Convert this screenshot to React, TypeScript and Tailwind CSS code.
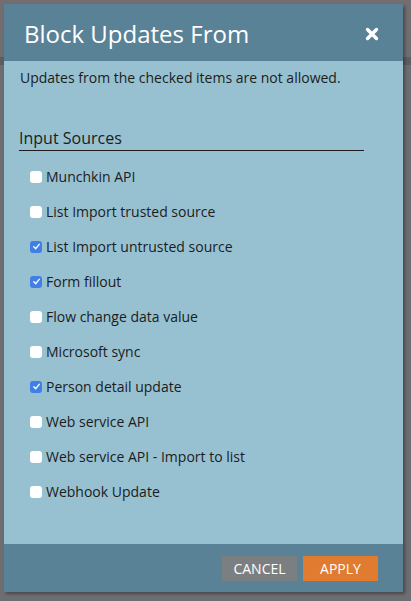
import React, { useState } from 'react';

const sources = [
  { label: 'Munchkin API', checked: false },
  { label: 'List Import trusted source', checked: false },
  { label: 'List Import untrusted source', checked: true },
  { label: 'Form fillout', checked: true },
  { label: 'Flow change data value', checked: false },
  { label: 'Microsoft sync', checked: false },
  { label: 'Person detail update', checked: true },
  { label: 'Web service API', checked: false },
  { label: 'Web service API - Import to list', checked: false },
  { label: 'Webhook Update', checked: false },
];

const Box: React.FC<{ checked: boolean }> = ({ checked }) =>
  checked ? (
    <span className="flex h-[12px] w-[12px] items-center justify-center rounded-[3px] bg-[#3f7fe6]">
      <svg width="9" height="9" viewBox="0 0 10 10">
        <path d="M2 5.3 L4.2 7.4 L8 2.6" fill="none" stroke="white" strokeWidth="1.6" strokeLinecap="round" strokeLinejoin="round" />
      </svg>
    </span>
  ) : (
    <span className="h-[12px] w-[12px] rounded-[3px] bg-white" />
  );

export default function App() {
  const [items, setItems] = useState(sources);

  const toggle = (i: number) =>
    setItems(items.map((it, j) => (j === i ? { ...it, checked: !it.checked } : it)));

  return (
    <div
      className="h-[601px] w-[411px] bg-[linear-gradient(to_bottom,#756d70_0px,#6e6e72_57px,#5e5e62_57px,#5e5e62_65px,#6e6e72_65px)] p-[4px]"
      style={{ fontFamily: '"Open Sans", "Noto Sans", sans-serif' }}
    >
      <div className="flex h-[588px] w-[399px] flex-col bg-[#97c1d1] shadow-[2px_2px_3px_rgba(0,0,0,0.35)]">
        {/* header */}
        <div className="flex h-[57px] items-center justify-between bg-[#5a8296] pl-[20px] pr-[24px] pt-[2px] text-white">
          <h2 className="text-[24px] leading-none">Block Updates From</h2>
          <svg width="14" height="14" viewBox="0 0 14 14">
            <path d="M2.5 2.5 L11.5 11.5 M11.5 2.5 L2.5 11.5" stroke="white" strokeWidth="3.4" strokeLinecap="round" />
          </svg>
        </div>

        {/* body */}
        <div className="flex-1 px-[16px] pt-[7px] text-[#1c1c1c]">
          <p className="text-[14px] leading-[20px]">Updates from the checked items are not allowed.</p>

          <h3 className="-ml-px mt-[40px] w-[345px] border-b border-[#1c1c1c] pb-[2px] text-[16px] leading-[20px]">
            Input Sources
          </h3>

          <ul className="mt-[8px] pl-[10px]">
            {items.map((it, i) => (
              <li
                key={it.label}
                className="flex h-[35px] cursor-pointer items-center gap-[4px] text-[14px]"
                onClick={() => toggle(i)}
              >
                <Box checked={it.checked} />
                <span>{it.label}</span>
              </li>
            ))}
          </ul>
        </div>

        {/* footer */}
        <div className="flex h-[48px] items-start justify-end gap-[6px] bg-[#5a8296] pr-[25px] pt-[12px]">
          <button className="h-[25px] w-[75px] bg-[#7b7f82] text-[14px] text-white">CANCEL</button>
          <button className="h-[25px] w-[75px] bg-[#e07b30] text-[14px] text-white">APPLY</button>
        </div>
      </div>
    </div>
  );
}
